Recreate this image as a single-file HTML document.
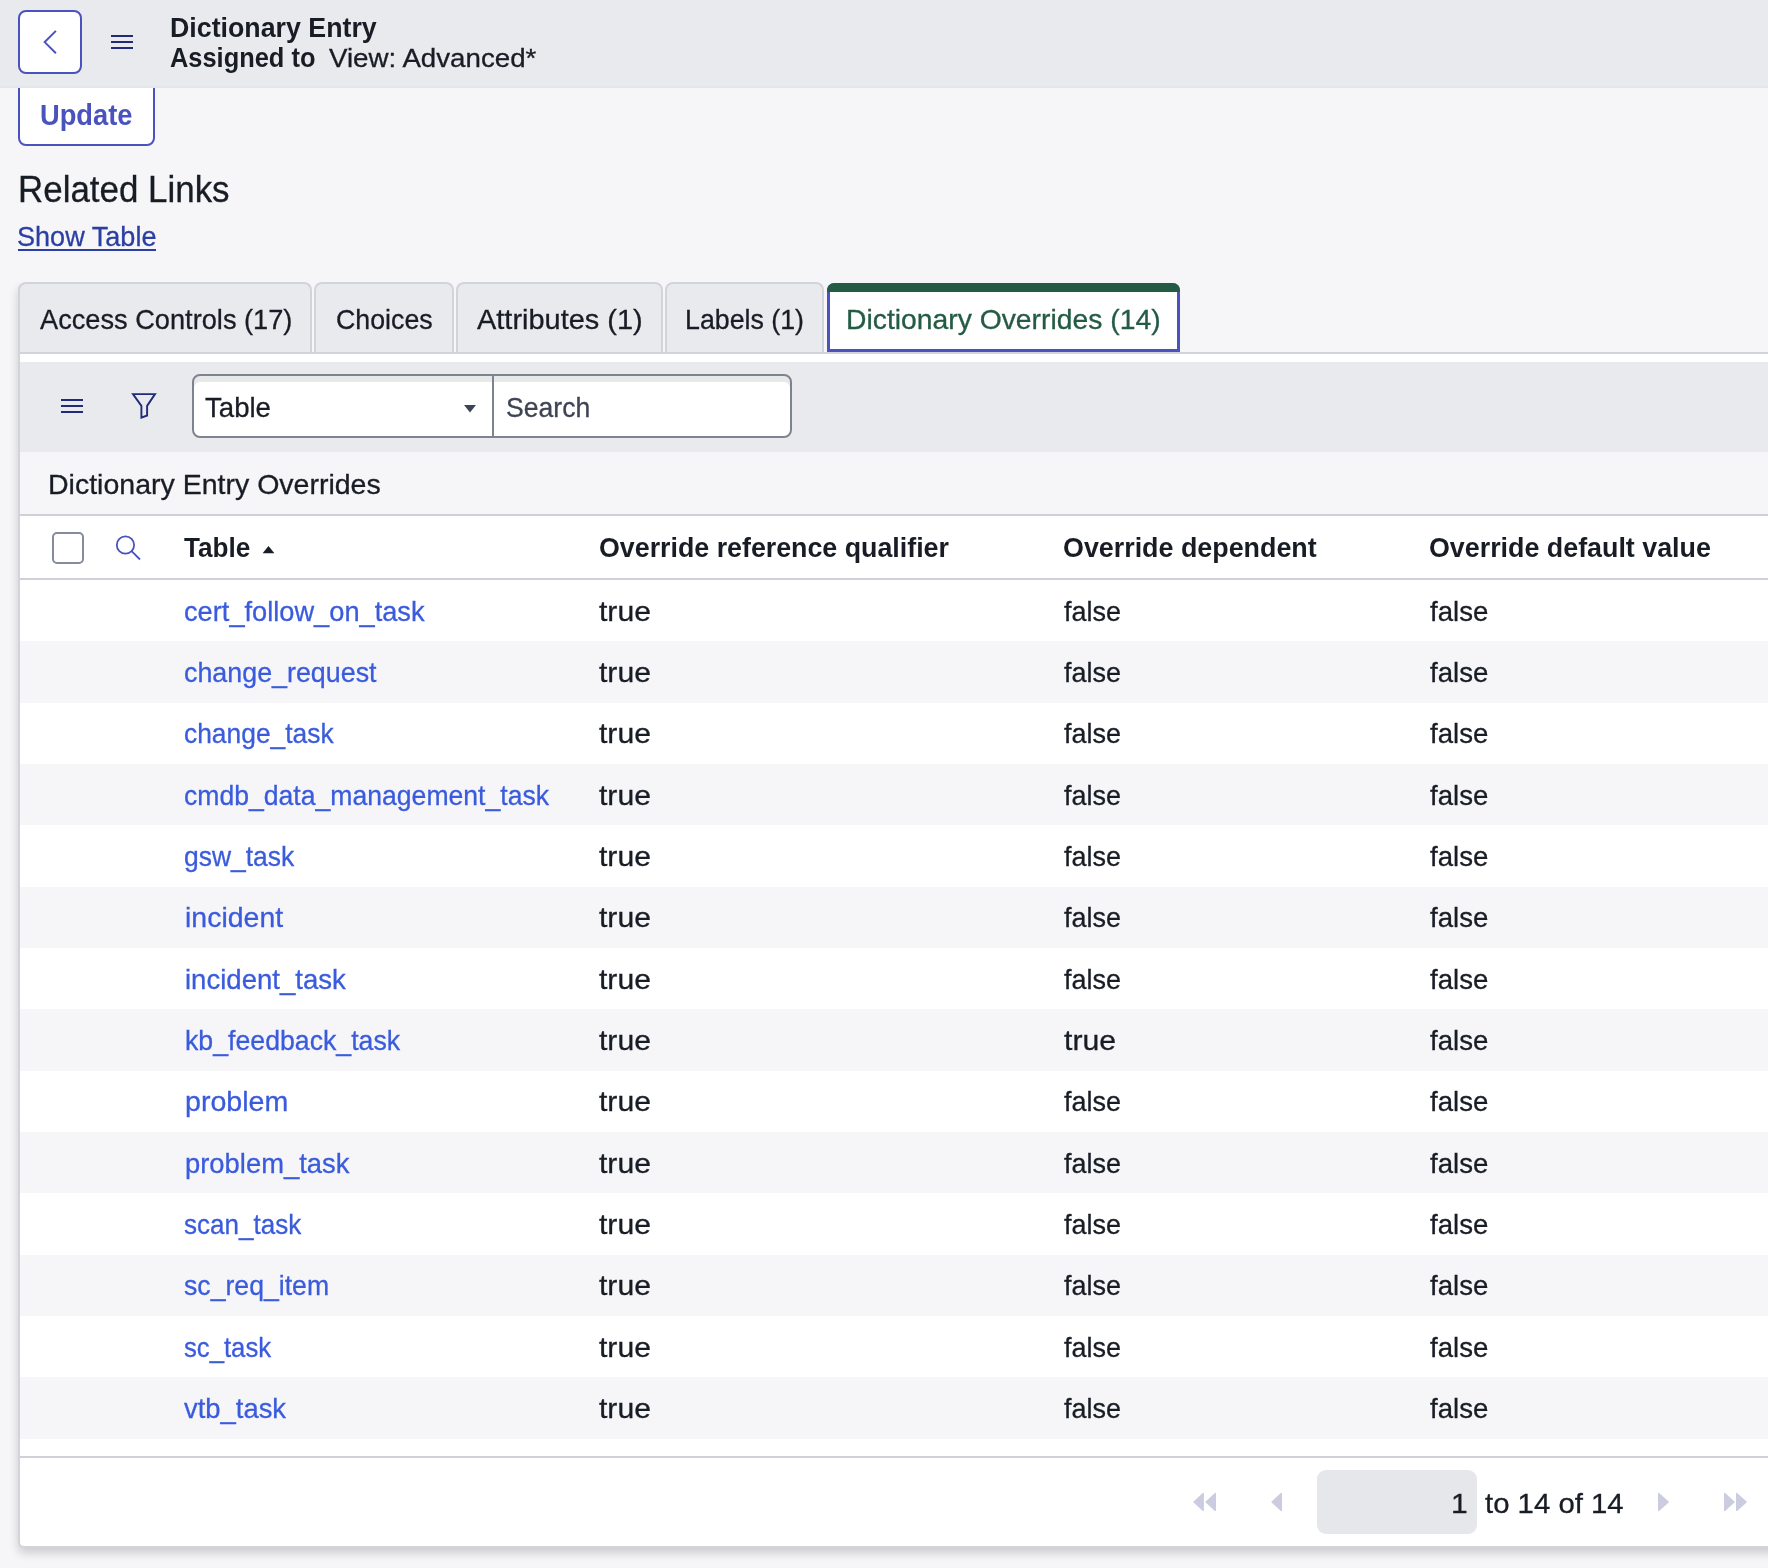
<!DOCTYPE html>
<html><head><meta charset="utf-8"><title>Dictionary Entry</title>
<style>
html,body{margin:0;padding:0}
html{overflow:hidden}
body{width:1768px;height:1568px;overflow:hidden;background:#f6f6f8;font-family:"Liberation Sans",sans-serif}
#root{position:relative;width:1768px;height:1568px;overflow:hidden;background:#f6f6f8}
.a{position:absolute}
.t{position:absolute;white-space:nowrap;transform-origin:0 50%;font-family:"Liberation Sans",sans-serif}
.r{font-weight:400;-webkit-text-stroke:0.3px}.b{font-weight:700}
.tab{position:absolute;top:282px;height:70px;box-sizing:border-box;background:#e9eaee;border:2px solid #d3d4da;border-bottom:none;border-radius:8px 8px 0 0}
.row{position:absolute;left:20px;right:0;background:#f6f6f8}
.ln{position:absolute;left:20px;right:0;height:2px;background:#d0d1d8}
</style></head><body><div id="root">

<div class="a" style="left:18px;top:70px;width:137px;height:76px;box-sizing:border-box;border:2px solid #4a52be;border-radius:8px;background:#fff"></div>
<div class="a" style="left:0;top:0;width:1768px;height:86px;background:#e9eaee;border-bottom:2px solid #e4e5ea"></div>
<div class="a" style="left:18px;top:10px;width:64px;height:64px;box-sizing:border-box;border:2px solid #4a52be;border-radius:8px;background:#fff"></div>
<svg class="a" style="left:18px;top:10px" width="64" height="64" viewBox="0 0 64 64"><path d="M37.9 20.9 L26.7 32.1 L37.9 43.3" fill="none" stroke="#4a52be" stroke-width="2" stroke-linecap="butt" stroke-linejoin="miter"/></svg>
<div class="a" style="left:111px;top:35px;width:22px;height:2px;background:#232a78"></div>
<div class="a" style="left:111px;top:41px;width:22px;height:2px;background:#232a78"></div>
<div class="a" style="left:111px;top:47px;width:22px;height:2px;background:#232a78"></div>
<div class="a" style="left:18px;top:282px;width:1790px;height:1266px;box-sizing:border-box;border-left:2px solid #d3d4da;border-bottom:2px solid #d3d4da;border-radius:8px 0 0 6px;box-shadow:0 5px 10px rgba(24,28,37,0.19);background:#fff"></div>
<div class="a" style="left:20px;top:270px;width:1760px;height:82px;background:#f6f6f8"></div>
<div class="a" style="left:0;top:270px;width:1768px;height:12px;background:#f6f6f8"></div>
<div class="tab" style="left:18px;width:294px"></div>
<div class="tab" style="left:314px;width:140px"></div>
<div class="tab" style="left:456px;width:207px"></div>
<div class="tab" style="left:665px;width:159px"></div>
<div class="a" style="left:20px;top:352px;width:1760px;height:2px;background:#d3d4da"></div>
<div class="a" style="left:827px;top:283px;width:353px;height:68.5px;box-sizing:border-box;background:#fff;border:3.5px solid #4a52be;border-top:none;border-radius:8px 8px 0 0"></div>
<div class="a" style="left:827px;top:283px;width:353px;height:8.5px;background:#245b45;border-radius:7px 7px 0 0"></div>
<div class="a" style="left:20px;top:362px;width:1760px;height:90px;background:#e9eaee"></div>
<div class="a" style="left:61px;top:399px;width:22px;height:2px;background:#232a78"></div>
<div class="a" style="left:61px;top:405px;width:22px;height:2px;background:#232a78"></div>
<div class="a" style="left:61px;top:411px;width:22px;height:2px;background:#232a78"></div>
<svg class="a" style="left:128px;top:390px" width="32" height="32" viewBox="0 0 32 32"><path d="M5 4.1 H27 L19.1 15.9 V25.5 L13.4 27.6 V15.9 Z" fill="none" stroke="#232a78" stroke-width="1.9" stroke-linejoin="miter"/></svg>
<div class="a" style="left:192px;top:374px;width:600px;height:64px;box-sizing:border-box;border:2px solid #7d8391;border-radius:8px;background:#fff;box-shadow:inset 0 6px 0 -0px #e7e9e8;overflow:hidden"></div>
<div class="a" style="left:492px;top:376px;width:2px;height:60px;background:#7d8391"></div>
<svg class="a" style="left:464px;top:405px" width="12" height="8" viewBox="0 0 12 8"><path d="M0 0 H12 L6 7.4 Z" fill="#3d4453"/></svg>
<div class="a" style="left:20px;top:452px;width:1760px;height:63px;background:#f6f6f8"></div>
<div class="ln" style="top:514px"></div>
<div class="ln" style="top:578px"></div>
<div class="a" style="left:52px;top:532px;width:32px;height:32px;box-sizing:border-box;border:2px solid #858b9b;border-radius:5px;background:#fff"></div>
<svg class="a" style="left:112px;top:532px" width="32" height="32" viewBox="0 0 32 32"><circle cx="13.45" cy="12.95" r="8.65" fill="none" stroke="#4a52be" stroke-width="1.8"/><path d="M19.6 19.1 L28 27.5" stroke="#4a52be" stroke-width="1.8" fill="none"/></svg>
<svg class="a" style="left:262px;top:545px" width="13" height="9" viewBox="0 0 13 9"><path d="M0.6 8.2 L6.5 1.0 L12.4 8.2 Z" fill="#181c25"/></svg>
<div class="row" style="top:641px;height:62px"></div>
<div class="row" style="top:764px;height:61px"></div>
<div class="row" style="top:887px;height:61px"></div>
<div class="row" style="top:1009px;height:62px"></div>
<div class="row" style="top:1132px;height:61px"></div>
<div class="row" style="top:1255px;height:61px"></div>
<div class="row" style="top:1377px;height:62px"></div>
<div class="ln" style="top:1456px"></div>
<div class="a" style="left:1317px;top:1470px;width:160px;height:64px;border-radius:9px;background:#e6e7eb"></div>
<svg class="a" style="left:1180px;top:1480px" width="588" height="45" viewBox="0 0 588 45"><path d="M23.2 13.6 V30.4 L14.0 22 Z M35.3 13.6 V30.4 L26.1 22 Z M101.3 13.6 V30.4 L92.1 22 Z M478.7 13.6 V30.4 L488.2 22 Z M544.7 13.6 V30.4 L554.0 22 Z M556.7 13.6 V30.4 L566.1 22 Z" fill="#cbcce0" stroke="#cbcce0" stroke-width="1.4" stroke-linejoin="round"/></svg>
<div class="a" style="left:18px;top:249px;width:137.5px;height:2px;background:#2b3fa3"></div>
<div class="a" style="left:0;top:0;width:1768px;height:1568px;will-change:transform">
<span class="t b" style="left:170.25px;top:15.30px;font-size:27px;line-height:27px;color:#181c25;transform:scaleX(0.9910);">Dictionary Entry</span>
<span class="t b" style="left:170.05px;top:45.40px;font-size:27px;line-height:27px;color:#181c25;transform:scaleX(0.9410);">Assigned to</span>
<span class="t r" style="left:328.80px;top:45.40px;font-size:26px;line-height:26px;color:#181c25;transform:scaleX(1.0650);">View: Advanced*</span>
<span class="t b" style="left:40.37px;top:100.60px;font-size:29px;line-height:29px;color:#4a52be;transform:scaleX(0.9405);">Update</span>
<span class="t r" style="left:17.61px;top:171.70px;font-size:36px;line-height:36px;color:#181c25;transform:scaleX(0.9698);">Related Links</span>
<span class="t r" style="left:16.83px;top:222.90px;font-size:28px;line-height:28px;color:#2b3fa3;transform:scaleX(0.9669);">Show Table</span>
<span class="t r" style="left:39.66px;top:305.50px;font-size:28px;line-height:28px;color:#181c25;transform:scaleX(0.9714);">Access Controls (17)</span>
<span class="t r" style="left:335.59px;top:305.50px;font-size:28px;line-height:28px;color:#181c25;transform:scaleX(0.9560);">Choices</span>
<span class="t r" style="left:476.64px;top:305.50px;font-size:28px;line-height:28px;color:#181c25;transform:scaleX(1.0335);">Attributes (1)</span>
<span class="t r" style="left:684.55px;top:305.50px;font-size:28px;line-height:28px;color:#181c25;transform:scaleX(0.9557);">Labels (1)</span>
<span class="t r" style="left:845.62px;top:305.50px;font-size:28px;line-height:28px;color:#245b45;transform:scaleX(1.0108);">Dictionary Overrides (14)</span>
<span class="t r" style="left:205.35px;top:393.70px;font-size:28px;line-height:28px;color:#181c25;transform:scaleX(0.9849);">Table</span>
<span class="t r" style="left:505.86px;top:393.70px;font-size:28px;line-height:28px;color:#3d4453;transform:scaleX(0.9494);">Search</span>
<span class="t r" style="left:47.60px;top:470.90px;font-size:28px;line-height:28px;color:#181c25;transform:scaleX(1.0183);">Dictionary Entry Overrides</span>
<span class="t b" style="left:184.15px;top:535.40px;font-size:27px;line-height:27px;color:#181c25;transform:scaleX(0.9675);">Table</span>
<span class="t b" style="left:599.19px;top:535.40px;font-size:27px;line-height:27px;color:#181c25;transform:scaleX(0.9922);">Override reference qualifier</span>
<span class="t b" style="left:1063.39px;top:535.40px;font-size:27px;line-height:27px;color:#181c25;transform:scaleX(0.9945);">Override dependent</span>
<span class="t b" style="left:1429.39px;top:535.40px;font-size:27px;line-height:27px;color:#181c25;transform:scaleX(0.9939);">Override default value</span>
<span class="t r" style="left:1450.62px;top:1490.10px;font-size:28px;line-height:28px;color:#181c25;transform:scaleX(1.0742);">1</span>
<span class="t r" style="left:1484.81px;top:1490.10px;font-size:28px;line-height:28px;color:#181c25;transform:scaleX(1.0479);">to 14 of 14</span>
<span class="t r" style="left:184.05px;top:597.60px;font-size:28px;line-height:28px;color:#3a5bdc;transform:scaleX(0.9722);">cert_follow_on_task</span>
<span class="t r" style="left:599.40px;top:597.60px;font-size:28px;line-height:28px;color:#181c25;transform:scaleX(1.0760);">true</span>
<span class="t r" style="left:1064.18px;top:597.60px;font-size:28px;line-height:28px;color:#181c25;transform:scaleX(0.9642);">false</span>
<span class="t r" style="left:1429.57px;top:597.60px;font-size:28px;line-height:28px;color:#181c25;transform:scaleX(0.9850);">false</span>
<span class="t r" style="left:184.07px;top:658.93px;font-size:28px;line-height:28px;color:#3a5bdc;transform:scaleX(0.9586);">change_request</span>
<span class="t r" style="left:599.40px;top:658.93px;font-size:28px;line-height:28px;color:#181c25;transform:scaleX(1.0760);">true</span>
<span class="t r" style="left:1064.18px;top:658.93px;font-size:28px;line-height:28px;color:#181c25;transform:scaleX(0.9642);">false</span>
<span class="t r" style="left:1429.57px;top:658.93px;font-size:28px;line-height:28px;color:#181c25;transform:scaleX(0.9850);">false</span>
<span class="t r" style="left:184.09px;top:720.27px;font-size:28px;line-height:28px;color:#3a5bdc;transform:scaleX(0.9426);">change_task</span>
<span class="t r" style="left:599.40px;top:720.27px;font-size:28px;line-height:28px;color:#181c25;transform:scaleX(1.0760);">true</span>
<span class="t r" style="left:1064.18px;top:720.27px;font-size:28px;line-height:28px;color:#181c25;transform:scaleX(0.9642);">false</span>
<span class="t r" style="left:1429.57px;top:720.27px;font-size:28px;line-height:28px;color:#181c25;transform:scaleX(0.9850);">false</span>
<span class="t r" style="left:184.08px;top:781.60px;font-size:28px;line-height:28px;color:#3a5bdc;transform:scaleX(0.9495);">cmdb_data_management_task</span>
<span class="t r" style="left:599.40px;top:781.60px;font-size:28px;line-height:28px;color:#181c25;transform:scaleX(1.0760);">true</span>
<span class="t r" style="left:1064.18px;top:781.60px;font-size:28px;line-height:28px;color:#181c25;transform:scaleX(0.9642);">false</span>
<span class="t r" style="left:1429.57px;top:781.60px;font-size:28px;line-height:28px;color:#181c25;transform:scaleX(0.9850);">false</span>
<span class="t r" style="left:183.92px;top:842.93px;font-size:28px;line-height:28px;color:#3a5bdc;transform:scaleX(0.9440);">gsw_task</span>
<span class="t r" style="left:599.40px;top:842.93px;font-size:28px;line-height:28px;color:#181c25;transform:scaleX(1.0760);">true</span>
<span class="t r" style="left:1064.18px;top:842.93px;font-size:28px;line-height:28px;color:#181c25;transform:scaleX(0.9642);">false</span>
<span class="t r" style="left:1429.57px;top:842.93px;font-size:28px;line-height:28px;color:#181c25;transform:scaleX(0.9850);">false</span>
<span class="t r" style="left:184.54px;top:904.26px;font-size:28px;line-height:28px;color:#3a5bdc;transform:scaleX(1.0170);">incident</span>
<span class="t r" style="left:599.40px;top:904.26px;font-size:28px;line-height:28px;color:#181c25;transform:scaleX(1.0760);">true</span>
<span class="t r" style="left:1064.18px;top:904.26px;font-size:28px;line-height:28px;color:#181c25;transform:scaleX(0.9642);">false</span>
<span class="t r" style="left:1429.57px;top:904.26px;font-size:28px;line-height:28px;color:#181c25;transform:scaleX(0.9850);">false</span>
<span class="t r" style="left:184.60px;top:965.60px;font-size:28px;line-height:28px;color:#3a5bdc;transform:scaleX(0.9840);">incident_task</span>
<span class="t r" style="left:599.40px;top:965.60px;font-size:28px;line-height:28px;color:#181c25;transform:scaleX(1.0760);">true</span>
<span class="t r" style="left:1064.18px;top:965.60px;font-size:28px;line-height:28px;color:#181c25;transform:scaleX(0.9642);">false</span>
<span class="t r" style="left:1429.57px;top:965.60px;font-size:28px;line-height:28px;color:#181c25;transform:scaleX(0.9850);">false</span>
<span class="t r" style="left:184.65px;top:1026.93px;font-size:28px;line-height:28px;color:#3a5bdc;transform:scaleX(0.9532);">kb_feedback_task</span>
<span class="t r" style="left:599.40px;top:1026.93px;font-size:28px;line-height:28px;color:#181c25;transform:scaleX(1.0760);">true</span>
<span class="t r" style="left:1064.10px;top:1026.93px;font-size:28px;line-height:28px;color:#181c25;transform:scaleX(1.0781);">true</span>
<span class="t r" style="left:1429.57px;top:1026.93px;font-size:28px;line-height:28px;color:#181c25;transform:scaleX(0.9850);">false</span>
<span class="t r" style="left:184.57px;top:1088.26px;font-size:28px;line-height:28px;color:#3a5bdc;transform:scaleX(1.0211);">problem</span>
<span class="t r" style="left:599.40px;top:1088.26px;font-size:28px;line-height:28px;color:#181c25;transform:scaleX(1.0760);">true</span>
<span class="t r" style="left:1064.18px;top:1088.26px;font-size:28px;line-height:28px;color:#181c25;transform:scaleX(0.9642);">false</span>
<span class="t r" style="left:1429.57px;top:1088.26px;font-size:28px;line-height:28px;color:#181c25;transform:scaleX(0.9850);">false</span>
<span class="t r" style="left:184.65px;top:1149.60px;font-size:28px;line-height:28px;color:#3a5bdc;transform:scaleX(0.9781);">problem_task</span>
<span class="t r" style="left:599.40px;top:1149.60px;font-size:28px;line-height:28px;color:#181c25;transform:scaleX(1.0760);">true</span>
<span class="t r" style="left:1064.18px;top:1149.60px;font-size:28px;line-height:28px;color:#181c25;transform:scaleX(0.9642);">false</span>
<span class="t r" style="left:1429.57px;top:1149.60px;font-size:28px;line-height:28px;color:#181c25;transform:scaleX(0.9850);">false</span>
<span class="t r" style="left:184.08px;top:1210.93px;font-size:28px;line-height:28px;color:#3a5bdc;transform:scaleX(0.9300);">scan_task</span>
<span class="t r" style="left:599.40px;top:1210.93px;font-size:28px;line-height:28px;color:#181c25;transform:scaleX(1.0760);">true</span>
<span class="t r" style="left:1064.18px;top:1210.93px;font-size:28px;line-height:28px;color:#181c25;transform:scaleX(0.9642);">false</span>
<span class="t r" style="left:1429.57px;top:1210.93px;font-size:28px;line-height:28px;color:#181c25;transform:scaleX(0.9850);">false</span>
<span class="t r" style="left:184.06px;top:1272.26px;font-size:28px;line-height:28px;color:#3a5bdc;transform:scaleX(0.9513);">sc_req_item</span>
<span class="t r" style="left:599.40px;top:1272.26px;font-size:28px;line-height:28px;color:#181c25;transform:scaleX(1.0760);">true</span>
<span class="t r" style="left:1064.18px;top:1272.26px;font-size:28px;line-height:28px;color:#181c25;transform:scaleX(0.9642);">false</span>
<span class="t r" style="left:1429.57px;top:1272.26px;font-size:28px;line-height:28px;color:#181c25;transform:scaleX(0.9850);">false</span>
<span class="t r" style="left:184.09px;top:1333.60px;font-size:28px;line-height:28px;color:#3a5bdc;transform:scaleX(0.9175);">sc_task</span>
<span class="t r" style="left:599.40px;top:1333.60px;font-size:28px;line-height:28px;color:#181c25;transform:scaleX(1.0760);">true</span>
<span class="t r" style="left:1064.18px;top:1333.60px;font-size:28px;line-height:28px;color:#181c25;transform:scaleX(0.9642);">false</span>
<span class="t r" style="left:1429.57px;top:1333.60px;font-size:28px;line-height:28px;color:#181c25;transform:scaleX(0.9850);">false</span>
<span class="t r" style="left:184.08px;top:1394.93px;font-size:28px;line-height:28px;color:#3a5bdc;transform:scaleX(0.9786);">vtb_task</span>
<span class="t r" style="left:599.40px;top:1394.93px;font-size:28px;line-height:28px;color:#181c25;transform:scaleX(1.0760);">true</span>
<span class="t r" style="left:1064.18px;top:1394.93px;font-size:28px;line-height:28px;color:#181c25;transform:scaleX(0.9642);">false</span>
<span class="t r" style="left:1429.57px;top:1394.93px;font-size:28px;line-height:28px;color:#181c25;transform:scaleX(0.9850);">false</span>
</div>
</div></body></html>
